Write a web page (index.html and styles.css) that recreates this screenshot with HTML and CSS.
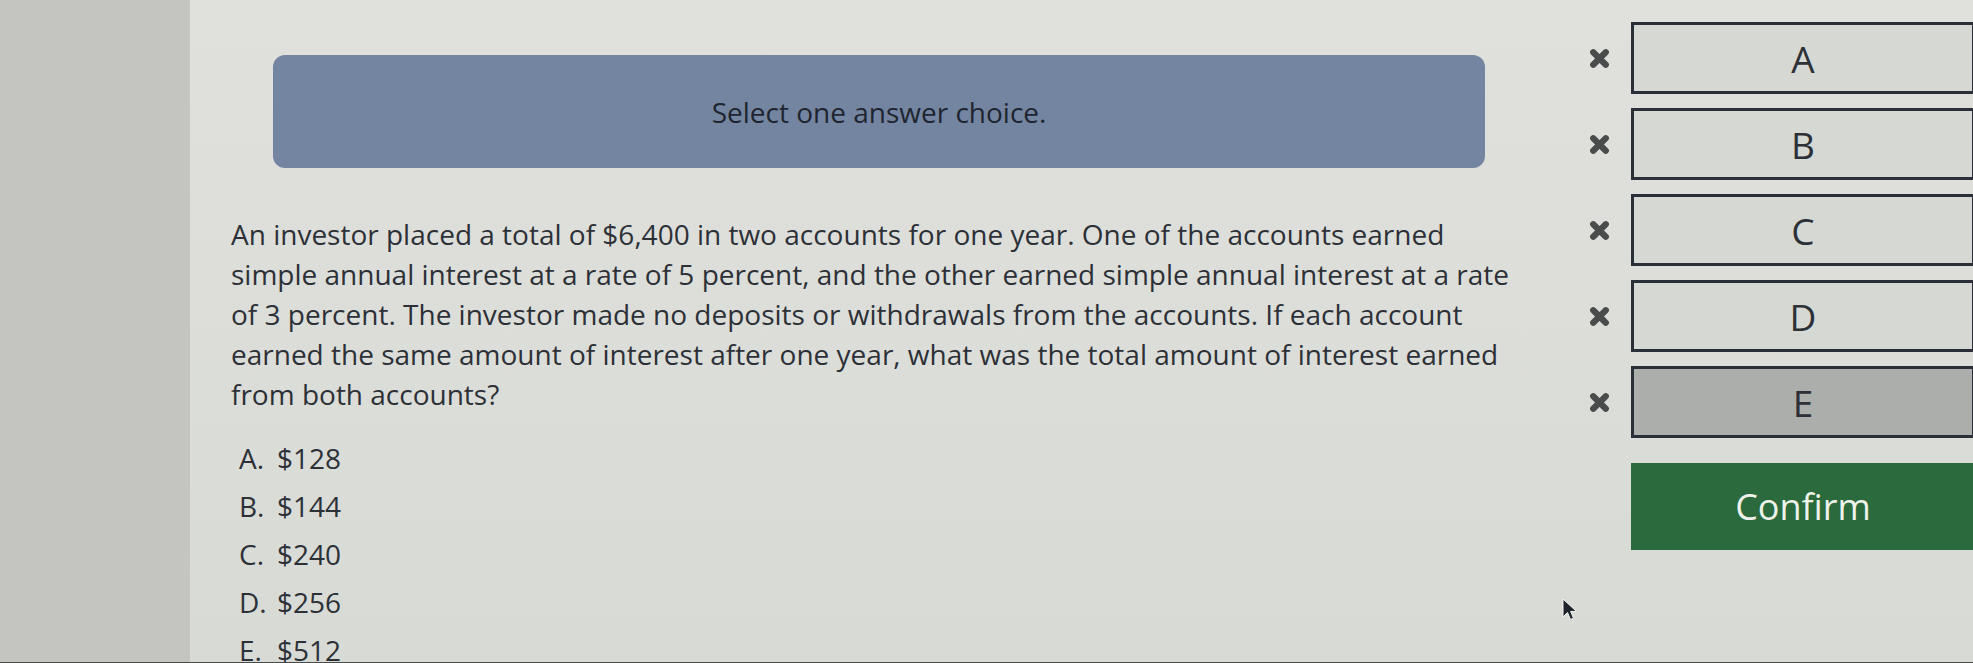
FILE: index.html
```html
<!DOCTYPE html>
<html lang="en">
<head>
    <meta charset="UTF-8">
    <meta name="viewport" content="width=device-width, initial-scale=1.0">
    <title>Practice Question</title>
    <link rel="stylesheet" href="styles.css">
</head>
<body>
    <div class="screen">
        <div class="side-panel"></div>

        <div class="question-area">
            <div class="instruction">Select one answer choice.</div>
            <p class="question-text">An investor placed a total of $6,400 in two accounts for one year. One of the accounts earned simple annual interest at a rate of 5 percent, and the other earned simple annual interest at a rate of 3 percent. The investor made no deposits or withdrawals from the accounts. If each account earned the same amount of interest after one year, what was the total amount of interest earned from both accounts?</p>
            <ul class="choices">
                <li><span class="choice-label">A.</span>$128</li>
                <li><span class="choice-label">B.</span>$144</li>
                <li><span class="choice-label">C.</span>$240</li>
                <li><span class="choice-label">D.</span>$256</li>
                <li><span class="choice-label">E.</span>$512</li>
            </ul>
        </div>

        <div class="answer-panel">
            <div class="answer-row">
                <button class="eliminate" aria-label="Eliminate A"><svg viewBox="0 0 22 22"><path d="M5 5 L17 17 M17 5 L5 17"/></svg></button>
                <button class="answer-box">A</button>
            </div>
            <div class="answer-row">
                <button class="eliminate" aria-label="Eliminate B"><svg viewBox="0 0 22 22"><path d="M5 5 L17 17 M17 5 L5 17"/></svg></button>
                <button class="answer-box">B</button>
            </div>
            <div class="answer-row">
                <button class="eliminate" aria-label="Eliminate C"><svg viewBox="0 0 22 22"><path d="M5 5 L17 17 M17 5 L5 17"/></svg></button>
                <button class="answer-box">C</button>
            </div>
            <div class="answer-row">
                <button class="eliminate" aria-label="Eliminate D"><svg viewBox="0 0 22 22"><path d="M5 5 L17 17 M17 5 L5 17"/></svg></button>
                <button class="answer-box">D</button>
            </div>
            <div class="answer-row">
                <button class="eliminate" aria-label="Eliminate E"><svg viewBox="0 0 22 22"><path d="M5 5 L17 17 M17 5 L5 17"/></svg></button>
                <button class="answer-box selected">E</button>
            </div>
            <button class="btn-confirm">Confirm</button>
        </div>

        <!-- mouse pointer resting on the page -->
        <svg class="pointer" viewBox="0 0 16 24">
            <path d="M1 1 L1 19 L5.5 14.5 L8.5 21.5 L11.5 20.2 L8.6 13.4 L14.5 13.4 Z"/>
        </svg>
    </div>
</body>
</html>
```

FILE: styles.css
```css
body {
    margin: 0;
    padding: 0;
    font-family: 'Open Sans', 'Noto Sans', sans-serif;
    color: #2d3137;
    background: #d9dbd7;
    overflow: hidden;
}
.screen {
    position: relative;
    display: flex;
    height: 662px;
    border-bottom: 1px solid #4a4a48;
    background: linear-gradient(to bottom, #e0e1dd, #d8dad6);
}
.side-panel {
    width: 190px;
    flex-shrink: 0;
    background: #c4c5c1;
}
.question-area {
    width: 1357px;
    padding-left: 41px;
    flex-shrink: 0;
}
.instruction {
    margin: 55px 0 0 42px;
    width: 1212px;
    height: 113px;
    display: flex;
    justify-content: center;
    align-items: center;
    background: #7485a1;
    border-radius: 12px;
    color: #1f2530;
    font-size: 28px;
}
.question-text {
    margin: 46px 0 0 0;
    width: 1285px;
    font-size: 28px;
    line-height: 40px;
}
.choices {
    list-style: none;
    margin: 20px 0 0 0;
    padding: 0 0 0 8px;
}
.choices li {
    font-size: 28px;
    line-height: 48px;
}
.choice-label {
    display: inline-block;
    width: 38px;
}
.answer-panel {
    display: flex;
    flex-direction: column;
    gap: 14px;
    padding-top: 22px;
}
.answer-row {
    display: flex;
    align-items: center;
    gap: 20px;
}
.eliminate {
    width: 23px;
    height: 23px;
    padding: 0;
    border: none;
    background: none;
    cursor: pointer;
}
.eliminate svg {
    display: block;
    width: 23px;
    height: 23px;
}
.eliminate path {
    stroke: #4a4b4b;
    stroke-width: 6;
    stroke-linecap: round;
    fill: none;
}
.answer-box {
    width: 344px;
    height: 72px;
    border: 3px solid #2b2f3a;
    background: #d6d8d4;
    color: #2d3137;
    font-family: 'Open Sans', 'Noto Sans', sans-serif;
    font-size: 37px;
    cursor: pointer;
}
.answer-box.selected {
    background: #acaeac;
}
.btn-confirm {
    margin: 11px 0 0 43px;
    width: 344px;
    height: 87px;
    border: none;
    background: #2a6a3c;
    color: #eef2ea;
    font-family: 'Open Sans', 'Noto Sans', sans-serif;
    font-size: 36px;
    cursor: pointer;
}
.pointer {
    position: absolute;
    left: 1562px;
    top: 598px;
    width: 16px;
    height: 24px;
}
.pointer path {
    fill: #1e232c;
    stroke: #f4f4f2;
    stroke-width: 1;
}
```
